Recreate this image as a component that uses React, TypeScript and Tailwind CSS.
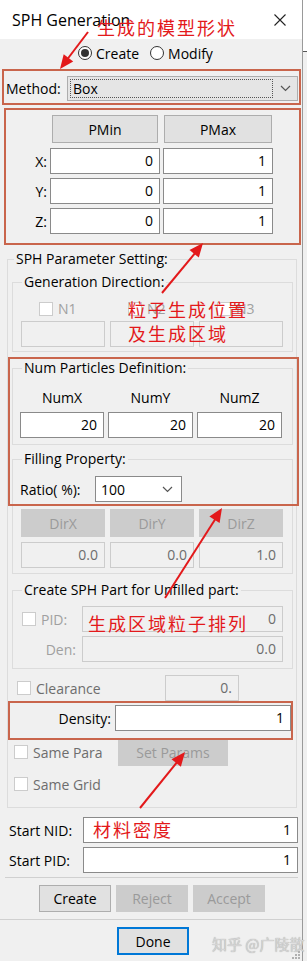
import React from 'react'

const inputBase = 'h-[26px] border text-right pr-[6px] leading-[24px]'

function Field({ value, w, disabled }: { value: string; w: string; disabled?: boolean }) {
  return (
    <div
      className={`${inputBase} ${w} ${
        disabled ? 'bg-[#f0f0f0] border-[#cccccc] text-[#6d6d6d]' : 'bg-white border-[#8a8a8a] text-black'
      }`}
    >
      {value}
    </div>
  )
}

function Check({ label, tone = 'text-[#6d6d6d]' }: { label?: string; tone?: string }) {
  return (
    <div className="flex items-center gap-[5px]">
      <div className="w-[14px] h-[14px] bg-white border border-[#cccccc]" />
      {label && <span className={tone}>{label}</span>}
    </div>
  )
}

function Radio({ checked, label }: { checked?: boolean; label: string }) {
  return (
    <div className="flex items-center gap-[4px]">
      <div className="w-[14px] h-[14px] rounded-full border border-[#333] bg-white flex items-center justify-center">
        {checked && <div className="w-[8px] h-[8px] rounded-full bg-[#333]" />}
      </div>
      <span>{label}</span>
    </div>
  )
}

function Btn({ label, w, disabled }: { label: string; w: string; disabled?: boolean }) {
  return (
    <div
      className={`${w} h-full flex items-center justify-center border ${
        disabled ? 'bg-[#cccccc] border-[#cccccc] text-[#9a9a9a]' : 'bg-[#e1e1e1] border-[#adadad] text-black'
      }`}
    >
      {label}
    </div>
  )
}

function Group({ title, className, children }: { title: string; className: string; children: React.ReactNode }) {
  return (
    <fieldset className={`border border-[#dcdcdc] ${className}`}>
      <legend className="ml-[9px] px-[2px] leading-[20px]">{title}</legend>
      {children}
    </fieldset>
  )
}

function Chevron() {
  return (
    <svg width="11" height="7" viewBox="0 0 11 7" fill="none">
      <path d="M1 1l4.5 4.5L10 1" stroke="#555" strokeWidth="1.2" />
    </svg>
  )
}

// annotation arrows drawn over the dialog
const arrows = [
  { x1: 88, y1: 32, x2: 66, y2: 61, head: '60,69 73.2,61.4 63.7,54.2' },
  { x1: 162, y1: 293, x2: 196, y2: 252, head: '203,243 198.8,257.6 189.5,250' },
  { x1: 165, y1: 598, x2: 216, y2: 518, head: '222,508 219.6,523 209.4,516.6' },
  { x1: 140, y1: 808, x2: 178, y2: 761, head: '185,752 180.9,766.7 171.5,759.2' },
]

const boxes = [
  { x: 3, y: 70, w: 297, h: 34 },
  { x: 5, y: 109, w: 295, h: 135 },
  { x: 9, y: 358, w: 289, h: 147 },
  { x: 9, y: 702, w: 283, h: 37 },
]

export default function App() {
  return (
    <div className="relative w-[307px] h-[961px] overflow-hidden bg-[#f0f0f0] text-[14px] text-black font-['Open_Sans',sans-serif]">
      <div className="absolute right-0 top-0 w-[4px] h-[52px] bg-white border-b border-[#555]" />
      <div className="w-[303px] h-full border-r border-[#9a9a9a]">
        {/* Title bar */}
        <div className="h-[39px] bg-white flex items-center justify-between pl-[12px] pr-[16px]">
          <span className="text-[16px]">SPH Generation</span>
          <svg width="12" height="12" viewBox="0 0 12 12">
            <path d="M0.5 0.5l11 11M11.5 0.5l-11 11" stroke="#222" strokeWidth="1.1" />
          </svg>
        </div>

        {/* Create / Modify */}
        <div className="h-[28px] flex items-center pl-[78px] gap-[11px]">
          <Radio checked label="Create" />
          <Radio label="Modify" />
        </div>

        {/* Method */}
        <div className="mt-[9px] h-[25px] flex items-center pl-[6px]">
          <span className="w-[61px]">Method:</span>
          <div className="w-[231px] h-full bg-[#e5e5e5] border border-[#adadad] flex items-center justify-between p-[2px] pr-[6px]">
            <div className="h-full w-[203px] border border-dotted border-[#555] bg-[#e5e5e5] flex items-center pl-[2px]">Box</div>
            <Chevron />
          </div>
        </div>

        {/* PMin / PMax */}
        <div className="mt-[14px] h-[28px] flex pl-[52px] gap-[6px]">
          <Btn label="PMin" w="w-[106px]" />
          <Btn label="PMax" w="w-[108px]" />
        </div>
        <div className="mt-[5px] flex flex-col gap-[4px]">
          {['X:', 'Y:', 'Z:'].map((l) => (
            <div key={l} className="flex items-center h-[26px]">
              <span className="w-[47px] text-right">{l}</span>
              <div className="ml-[3px]"><Field value="0" w="w-[110px]" /></div>
              <div className="ml-[3px]"><Field value="1" w="w-[110px]" /></div>
            </div>
          ))}
        </div>

        {/* SPH Parameter Setting */}
        <fieldset className="mt-[15px] ml-[7px] w-[290px] border border-[#dcdcdc] pb-[13px]">
          <legend className="ml-[6px] px-[2px] leading-[20px]">SPH Parameter Setting:</legend>

          <Group title="Generation Direction:" className="mt-[3px] ml-[4px] w-[281px] pb-[4px]">
            <div className="mt-[6px] h-[20px] grid grid-cols-[84px_84px_84px] gap-x-[5px] pl-[8px]">
              {['N1', 'N2', 'N3'].map((n) => (
                <div key={n} className="pl-[18px] flex items-center">
                  <Check label={n} tone="text-[#a0a0a0]" />
                </div>
              ))}
            </div>
            <div className="mt-[3px] grid grid-cols-[84px_84px_84px] gap-x-[5px] pl-[8px]">
              <Field value="" w="w-full" disabled />
              <Field value="" w="w-full" disabled />
              <Field value="" w="w-full" disabled />
            </div>
          </Group>

          <Group title="Num Particles Definition:" className="mt-[6px] ml-[4px] w-[281px] pb-[6px]">
            <div className="mt-[9px] h-[20px] grid grid-cols-[84px_85px_85px] gap-x-[4px] pl-[7px] text-center">
              <span>NumX</span>
              <span>NumY</span>
              <span>NumZ</span>
            </div>
            <div className="mt-[5px] grid grid-cols-[84px_85px_85px] gap-x-[4px] pl-[7px]">
              <Field value="20" w="w-full" />
              <Field value="20" w="w-full" />
              <Field value="20" w="w-full" />
            </div>
          </Group>

          <Group title="Filling Property:" className="mt-[4px] ml-[4px] w-[281px] pb-[5px]">
            <div className="mt-[7px] h-[26px] flex items-center pl-[7px]">
              <span className="w-[75px]">Ratio( %):</span>
              <div className="w-[87px] h-full bg-white border border-[#8a8a8a] flex items-center justify-between pl-[5px] pr-[8px]">
                <span>100</span>
                <Chevron />
              </div>
            </div>
            <div className="mt-[7px] h-[28px] grid grid-cols-[84px_84px_84px] gap-x-[5px] pl-[8px]">
              <Btn label="DirX" w="w-full" disabled />
              <Btn label="DirY" w="w-full" disabled />
              <Btn label="DirZ" w="w-full" disabled />
            </div>
            <div className="mt-[5px] grid grid-cols-[84px_84px_84px] gap-x-[5px] pl-[8px]">
              <Field value="0.0" w="w-full" disabled />
              <Field value="0.0" w="w-full" disabled />
              <Field value="1.0" w="w-full" disabled />
            </div>
          </Group>

          <Group title="Create SPH Part for Unfilled part:" className="mt-[6px] ml-[4px] w-[281px] pb-[6px]">
            <div className="mt-[6px] h-[26px] flex items-center pl-[9px]">
              <div className="w-[60px]">
                <Check label="PID:" tone="text-[#a0a0a0]" />
              </div>
              <Field value="0" w="w-[201px]" disabled />
            </div>
            <div className="mt-[4px] h-[26px] flex items-center pl-[9px]">
              <span className="w-[57px] pr-[3px] text-right text-[#a0a0a0]">Den:</span>
              <div className="ml-[3px]"><Field value="0.0" w="w-[201px]" disabled /></div>
            </div>
          </Group>

          <div className="mt-[6px] h-[26px] flex items-center pl-[9px]">
            <div className="w-[148px]">
              <Check label="Clearance" />
            </div>
            <Field value="0." w="w-[74px]" disabled />
          </div>

          <div className="mt-[4px] h-[26px] flex items-center">
            <span className="w-[103px] text-right">Density:</span>
            <div className="ml-[4px]"><Field value="1" w="w-[176px]" /></div>
          </div>

          <div className="mt-[7px] h-[28px] flex items-center pl-[6px]">
            <div className="w-[104px]">
              <Check label="Same Para" />
            </div>
            <div className="h-full"><Btn label="Set Params" w="w-[110px]" disabled /></div>
          </div>

          <div className="mt-[8px] h-[20px] flex items-center pl-[6px]">
            <Check label="Same Grid" />
          </div>
        </fieldset>

        {/* Start IDs */}
        <div className="mt-[9px] h-[26px] flex items-center pl-[9px]">
          <span className="w-[74px]">Start NID:</span>
          <Field value="1" w="w-[215px]" />
        </div>
        <div className="mt-[4px] h-[26px] flex items-center pl-[9px]">
          <span className="w-[74px]">Start PID:</span>
          <Field value="1" w="w-[215px]" />
        </div>

        <div className="mt-[4px] ml-[5px] w-[293px] border-t border-[#d0d0d0]" />

        <div className="mt-[7px] h-[27px] flex pl-[39px] gap-[5px]">
          <Btn label="Create" w="w-[72px]" />
          <Btn label="Reject" w="w-[72px]" disabled />
          <Btn label="Accept" w="w-[72px]" disabled />
        </div>

        <div className="mt-[7px] w-full border-t border-[#d0d0d0]" />

        <div className="mt-[7px] h-[28px] flex pl-[117px]">
          <div className="w-[72px] h-full flex items-center justify-center bg-[#e1e1e1] border-2 border-[#0078d7]">Done</div>
        </div>
      </div>

      {/* watermark */}
      <div className="absolute left-[212px] top-[933px] text-[15px] text-[#d4d4d4] font-['Noto_Sans_CJK_SC',sans-serif] [text-shadow:0_0_1px_#9a9a9a]">
        知乎 @广陵散
      </div>
      {/* resize grip */}
      <div className="absolute right-[7px] bottom-[2px] grid grid-cols-3 gap-[1px]">
        {[0, 0, 1, 0, 1, 1, 1, 1, 1].map((v, i) => (
          <div key={i} className={`w-[2px] h-[2px] ${v ? 'bg-[#b0b0b0]' : ''}`} />
        ))}
      </div>

      {/* annotation overlay */}
      <svg className="absolute inset-0 pointer-events-none" width="307" height="961">
        {boxes.map((b, i) => (
          <rect key={i} x={b.x} y={b.y} width={b.w} height={b.h} fill="none" stroke="#c9654c" strokeWidth="2" />
        ))}
        {arrows.map((a, i) => (
          <g key={i}>
            <line x1={a.x1} y1={a.y1} x2={a.x2} y2={a.y2} stroke="#e3191b" strokeWidth="2" />
            <polygon points={a.head} fill="#e3191b" />
          </g>
        ))}
      </svg>
      <div className="absolute inset-0 pointer-events-none text-[#e3191b] text-[18px] leading-[24px] tracking-[2px] font-['Noto_Sans_CJK_SC',serif]">
        <div className="absolute left-[97px] top-[15px]">生成的模型形状</div>
        <div className="absolute left-[128px] top-[297px]">粒子生成位置<br />及生成区域</div>
        <div className="absolute left-[88px] top-[611px]">生成区域粒子排列</div>
        <div className="absolute left-[93px] top-[817px]">材料密度</div>
      </div>
    </div>
  )
}
